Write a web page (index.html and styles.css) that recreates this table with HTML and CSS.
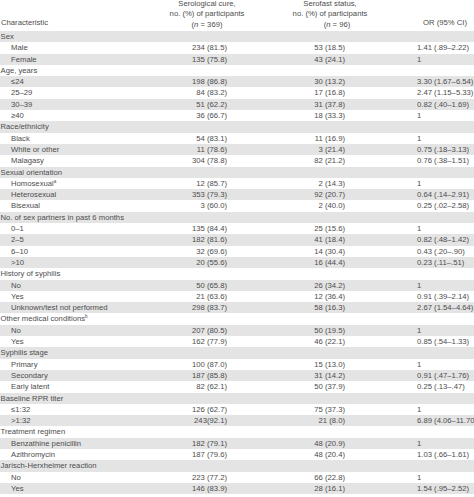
FILE: index.html
```html
<!DOCTYPE html>
<html>
<head>
<meta charset="utf-8">
<link rel="stylesheet" href="styles.css">
</head>
<body>
<div class="page">
  <div class="head">
    <div class="h-char">Characteristic</div>
    <div class="h-col h-cure">Serological cure,<br>no. (%) of participants<br>(<i>n</i> = 369)</div>
    <div class="h-col h-fast">Serofast status,<br>no. (%) of participants<br><span class="nline">(<i>n</i> = 96)</span></div>
    <div class="h-or">OR (95% CI)</div>
  </div>
  <div class="rows">
    <div class="row grp"><span class="c1">Sex</span><span class="c2"></span><span class="c3"></span><span class="c4"></span></div>
    <div class="row"><span class="c1 sub">Male</span><span class="c2">234 (81.5)</span><span class="c3">53 (18.5)</span><span class="c4">1.41 (.89–2.22)</span></div>
    <div class="row"><span class="c1 sub">Female</span><span class="c2">135 (75.8)</span><span class="c3">43 (24.1)</span><span class="c4">1</span></div>
    <div class="row grp"><span class="c1">Age, years</span><span class="c2"></span><span class="c3"></span><span class="c4"></span></div>
    <div class="row"><span class="c1 sub">≤24</span><span class="c2">198 (86.8)</span><span class="c3">30 (13.2)</span><span class="c4">3.30 (1.67–6.54)</span></div>
    <div class="row"><span class="c1 sub">25–29</span><span class="c2">84 (83.2)</span><span class="c3">17 (16.8)</span><span class="c4">2.47 (1.15–5.33)</span></div>
    <div class="row"><span class="c1 sub">30–39</span><span class="c2">51 (62.2)</span><span class="c3">31 (37.8)</span><span class="c4">0.82 (.40–1.69)</span></div>
    <div class="row"><span class="c1 sub">≥40</span><span class="c2">36 (66.7)</span><span class="c3">18 (33.3)</span><span class="c4">1</span></div>
    <div class="row grp"><span class="c1">Race/ethnicity</span><span class="c2"></span><span class="c3"></span><span class="c4"></span></div>
    <div class="row"><span class="c1 sub">Black</span><span class="c2">54 (83.1)</span><span class="c3">11 (16.9)</span><span class="c4">1</span></div>
    <div class="row"><span class="c1 sub">White or other</span><span class="c2">11 (78.6)</span><span class="c3">3 (21.4)</span><span class="c4">0.75 (.18–3.13)</span></div>
    <div class="row"><span class="c1 sub">Malagasy</span><span class="c2">304 (78.8)</span><span class="c3">82 (21.2)</span><span class="c4">0.76 (.38–1.51)</span></div>
    <div class="row grp"><span class="c1">Sexual orientation</span><span class="c2"></span><span class="c3"></span><span class="c4"></span></div>
    <div class="row"><span class="c1 sub">Homosexual<sup>a</sup></span><span class="c2">12 (85.7)</span><span class="c3">2 (14.3)</span><span class="c4">1</span></div>
    <div class="row"><span class="c1 sub">Heterosexual</span><span class="c2">353 (79.3)</span><span class="c3">92 (20.7)</span><span class="c4">0.64 (.14–2.91)</span></div>
    <div class="row"><span class="c1 sub">Bisexual</span><span class="c2">3 (60.0)</span><span class="c3">2 (40.0)</span><span class="c4">0.25 (.02–2.58)</span></div>
    <div class="row grp"><span class="c1">No. of sex partners in past 6 months</span><span class="c2"></span><span class="c3"></span><span class="c4"></span></div>
    <div class="row"><span class="c1 sub">0–1</span><span class="c2">135 (84.4)</span><span class="c3">25 (15.6)</span><span class="c4">1</span></div>
    <div class="row"><span class="c1 sub">2–5</span><span class="c2">182 (81.6)</span><span class="c3">41 (18.4)</span><span class="c4">0.82 (.48–1.42)</span></div>
    <div class="row"><span class="c1 sub">6–10</span><span class="c2">32 (69.6)</span><span class="c3">14 (30.4)</span><span class="c4">0.43 (.20–.90)</span></div>
    <div class="row"><span class="c1 sub">&gt;10</span><span class="c2">20 (55.6)</span><span class="c3">16 (44.4)</span><span class="c4">0.23 (.11–.51)</span></div>
    <div class="row grp"><span class="c1">History of syphilis</span><span class="c2"></span><span class="c3"></span><span class="c4"></span></div>
    <div class="row"><span class="c1 sub">No</span><span class="c2">50 (65.8)</span><span class="c3">26 (34.2)</span><span class="c4">1</span></div>
    <div class="row"><span class="c1 sub">Yes</span><span class="c2">21 (63.6)</span><span class="c3">12 (36.4)</span><span class="c4">0.91 (.39–2.14)</span></div>
    <div class="row"><span class="c1 sub">Unknown/test not performed</span><span class="c2">298 (83.7)</span><span class="c3">58 (16.3)</span><span class="c4">2.67 (1.54–4.64)</span></div>
    <div class="row grp"><span class="c1">Other medical conditions<sup>b</sup></span><span class="c2"></span><span class="c3"></span><span class="c4"></span></div>
    <div class="row"><span class="c1 sub">No</span><span class="c2">207 (80.5)</span><span class="c3">50 (19.5)</span><span class="c4">1</span></div>
    <div class="row"><span class="c1 sub">Yes</span><span class="c2">162 (77.9)</span><span class="c3">46 (22.1)</span><span class="c4">0.85 (.54–1.33)</span></div>
    <div class="row grp"><span class="c1">Syphilis stage</span><span class="c2"></span><span class="c3"></span><span class="c4"></span></div>
    <div class="row"><span class="c1 sub">Primary</span><span class="c2">100 (87.0)</span><span class="c3">15 (13.0)</span><span class="c4">1</span></div>
    <div class="row"><span class="c1 sub">Secondary</span><span class="c2">187 (85.8)</span><span class="c3">31 (14.2)</span><span class="c4">0.91 (.47–1.76)</span></div>
    <div class="row"><span class="c1 sub">Early latent</span><span class="c2">82 (62.1)</span><span class="c3">50 (37.9)</span><span class="c4">0.25 (.13–.47)</span></div>
    <div class="row grp"><span class="c1">Baseline RPR titer</span><span class="c2"></span><span class="c3"></span><span class="c4"></span></div>
    <div class="row"><span class="c1 sub">≤1:32</span><span class="c2">126 (62.7)</span><span class="c3">75 (37.3)</span><span class="c4">1</span></div>
    <div class="row"><span class="c1 sub">&gt;1:32</span><span class="c2">243(92.1)</span><span class="c3">21 (8.0)</span><span class="c4">6.89 (4.06–11.70)</span></div>
    <div class="row grp"><span class="c1">Treatment regimen</span><span class="c2"></span><span class="c3"></span><span class="c4"></span></div>
    <div class="row"><span class="c1 sub">Benzathine penicillin</span><span class="c2">182 (79.1)</span><span class="c3">48 (20.9)</span><span class="c4">1</span></div>
    <div class="row"><span class="c1 sub">Azithromycin</span><span class="c2">187 (79.6)</span><span class="c3">48 (20.4)</span><span class="c4">1.03 (.66–1.61)</span></div>
    <div class="row grp"><span class="c1">Jarisch-Herxheimer reaction</span><span class="c2"></span><span class="c3"></span><span class="c4"></span></div>
    <div class="row"><span class="c1 sub">No</span><span class="c2">223 (77.2)</span><span class="c3">66 (22.8)</span><span class="c4">1</span></div>
    <div class="row"><span class="c1 sub">Yes</span><span class="c2">146 (83.9)</span><span class="c3">28 (16.1)</span><span class="c4">1.54 (.95–2.52)</span></div>
  </div>
</div>
</body>
</html>
```

FILE: styles.css
```css
html, body {
  margin: 0;
  padding: 0;
  background: #ffffff;
}
body {
  width: 474px;
  height: 497px;
  overflow: hidden;
  font-family: "Liberation Sans", Arial, Helvetica, sans-serif;
  font-size: 7.7px;
  color: #4d4d4d;
}
.page {
  width: 474px;
  overflow: hidden;
}
.head {
  display: flex;
  height: 31px;
}
.h-char {
  width: 166px;
  flex: none;
  padding-left: 1px;
  box-sizing: border-box;
  line-height: 10px;
  margin-top: 17.5px;
}
.h-col {
  width: 82px;
  flex: none;
  text-align: center;
  line-height: 10.3px;
  margin-top: -1px;
  white-space: nowrap;
}
.h-fast {
  margin-left: 41px;
}
.nline {
  padding-left: 14px;
}
.h-or {
  flex: none;
  margin-left: 52px;
  line-height: 10px;
  margin-top: 17.5px;
  white-space: nowrap;
}
i {
  font-style: italic;
}
.rows {
  display: flex;
  flex-direction: column;
}
.row {
  display: grid;
  grid-template-columns: 150px 77px 118px 1fr;
  height: 11.3px;
  align-items: center;
  line-height: 11.3px;
  white-space: nowrap;
}
.row:nth-child(odd) {
  background: #e4e4e4;
}
.c1 {
  padding-left: 0.5px;
}
.c1.sub {
  padding-left: 11px;
}
.c2, .c3 {
  text-align: right;
}
.c4 {
  padding-left: 72px;
}
sup {
  font-size: 4.5px;
  line-height: 0;
  vertical-align: 3px;
}
```
